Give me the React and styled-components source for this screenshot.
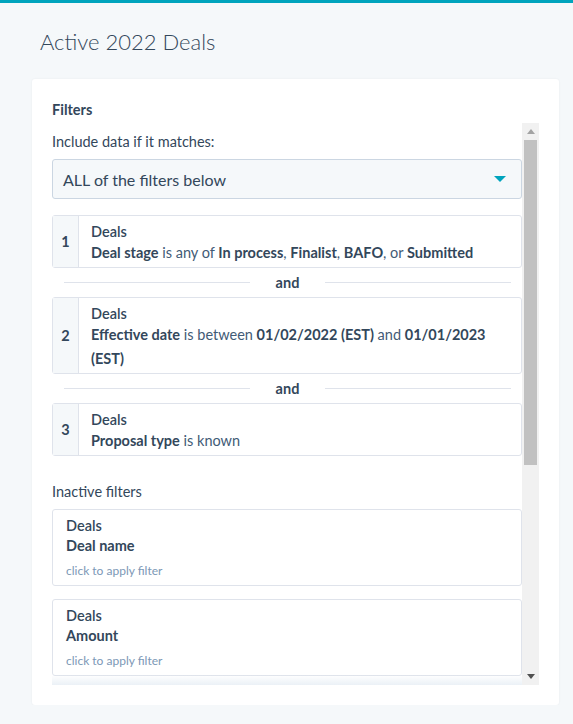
import React from "react";
import styled, { createGlobalStyle } from "styled-components";

const GlobalStyle = createGlobalStyle`
  * { box-sizing: border-box; }
  body {
    margin: 0;
    background: #f5f8fa;
    font-family: "Lato", "Noto Sans", sans-serif;
    color: #33475b;
  }
`;

const activeFilters = [
  {
    id: 1,
    parts: [
      ["b", "Deal stage"],
      ["n", " is any of "],
      ["b", "In process"],
      ["n", ", "],
      ["b", "Finalist"],
      ["n", ", "],
      ["b", "BAFO"],
      ["n", ", or "],
      ["b", "Submitted"],
    ],
  },
  {
    id: 2,
    parts: [
      ["b", "Effective date"],
      ["n", " is between "],
      ["b", "01/02/2022 (EST)"],
      ["n", " and "],
      ["b", "01/01/2023 (EST)"],
    ],
  },
  {
    id: 3,
    parts: [
      ["b", "Proposal type"],
      ["n", " is known"],
    ],
  },
];

const inactiveFilters = [
  "Deal name",
  "Amount",
  "Close date",
  "Deal owner",
  "Pipeline",
  "Create date",
];

const App = () => {
  return (
    <>
      <GlobalStyle />
      <TopBar />
      <Page>
        <Title>Active 2022 Deals</Title>
        <Card>
          <CardTitle>Filters</CardTitle>
          <ScrollWrap>
            <Viewport>
              <Label>Include data if it matches:</Label>
              <Select>
                <span>ALL of the filters below</span>
                <Caret />
              </Select>
              <FilterList>
                {activeFilters.map((f, i) => (
                  <React.Fragment key={f.id}>
                    {i > 0 && (
                      <AndRow>
                        <Line />
                        <span>and</span>
                        <Line />
                      </AndRow>
                    )}
                    <FilterCard>
                      <Num>{f.id}</Num>
                      <FilterBody>
                        <ObjectName>Deals</ObjectName>
                        <Rule>
                          {f.parts.map(([t, s], j) =>
                            t === "b" ? <strong key={j}>{s}</strong> : <span key={j}>{s}</span>
                          )}
                        </Rule>
                      </FilterBody>
                    </FilterCard>
                  </React.Fragment>
                ))}
              </FilterList>
              <SubLabel>Inactive filters</SubLabel>
              <InactiveList>
                {inactiveFilters.map((name) => (
                  <InactiveCard key={name}>
                    <ObjectName>Deals</ObjectName>
                    <PropName>{name}</PropName>
                    <Hint>click to apply filter</Hint>
                  </InactiveCard>
                ))}
              </InactiveList>
              <Fade />
            </Viewport>
            <ScrollBar>
              <ArrowBtn>
                <svg width="8" height="5" viewBox="0 0 8 5">
                  <polygon points="0,5 8,5 4,0" fill="#a3a3a3" />
                </svg>
              </ArrowBtn>
              <Track>
                <Thumb />
              </Track>
              <ArrowBtn>
                <svg width="8" height="5" viewBox="0 0 8 5">
                  <polygon points="0,0 8,0 4,5" fill="#505050" />
                </svg>
              </ArrowBtn>
            </ScrollBar>
          </ScrollWrap>
        </Card>
      </Page>
    </>
  );
};

export default App;

const TopBar = styled.div`
  height: 3px;
  background: #00a4bd;
`;

const Page = styled.div`
  padding: 0 14px 0 32px;
`;

const Title = styled.h1`
  margin: 0;
  padding: 24px 0 0 8px;
  height: 76px;
  font-size: 22px;
  font-weight: 300;
  line-height: 30px;
  color: #33475b;
`;

const Card = styled.div`
  background: #fff;
  border-radius: 3px;
  box-shadow: 0 0 2px rgba(45, 62, 80, 0.08);
  padding: 21px 20px 20px 20px;
`;

const CardTitle = styled.h2`
  margin: 0;
  font-size: 14.5px;
  font-weight: 700;
  line-height: 20px;
  color: #33475b;
`;

const ScrollWrap = styled.div`
  display: flex;
  height: 562px;
  margin-top: 3px;
`;

const Viewport = styled.div`
  position: relative;
  flex: 1;
  min-width: 0;
  overflow: hidden;
  padding-top: 8px;
`;

const ScrollBar = styled.div`
  width: 17px;
  flex: none;
  display: flex;
  flex-direction: column;
  background: #f1f1f1;
`;

const ArrowBtn = styled.div`
  height: 17px;
  flex: none;
  display: flex;
  align-items: center;
  justify-content: center;
`;

const Track = styled.div`
  flex: 1;
  padding: 0 2px;
`;

const Thumb = styled.div`
  height: 325px;
  background: #c1c1c1;
`;

const Fade = styled.div`
  position: absolute;
  left: 0;
  right: 0;
  bottom: 0;
  height: 10px;
  background: linear-gradient(rgba(234, 240, 246, 0), rgba(234, 240, 246, 0.95));
  pointer-events: none;
`;

const Label = styled.div`
  font-size: 14.5px;
  line-height: 22px;
  margin-bottom: 6px;
`;

const Select = styled.div`
  display: flex;
  align-items: center;
  justify-content: space-between;
  height: 40px;
  padding: 0 15px 0 10px;
  background: #f5f8fa;
  border: 1px solid #cbd6e2;
  border-radius: 3px;
  font-size: 16px;
  color: #33475b;
`;

const Caret = styled.span`
  width: 0;
  height: 0;
  border-left: 6px solid transparent;
  border-right: 6px solid transparent;
  border-top: 6px solid #00a4bd;
`;

const FilterList = styled.div`
  margin-top: 16px;
`;

const FilterCard = styled.div`
  display: flex;
  border: 1px solid #dfe3eb;
  border-radius: 3px;
  background: #fff;
`;

const Num = styled.div`
  width: 26px;
  flex: none;
  display: flex;
  align-items: center;
  justify-content: center;
  background: #f5f8fa;
  border-right: 1px solid #dfe3eb;
  font-size: 14.5px;
  font-weight: 700;
`;

const FilterBody = styled.div`
  padding: 7px 12px 2px 12px;
  font-size: 14.5px;
`;

const ObjectName = styled.div`
  font-size: 14.5px;
  line-height: 18px;
  font-weight: 600;
`;

const Rule = styled.div`
  line-height: 24px;
  strong {
    font-weight: 700;
  }
  span {
    font-weight: 400;
    color: #425b76;
  }
`;

const AndRow = styled.div`
  display: flex;
  align-items: center;
  gap: 24px;
  height: 29px;
  padding: 0 11px 0 12px;
  font-size: 14.5px;
  font-weight: 700;
  span {
    width: 27px;
    text-align: center;
  }
`;

const Line = styled.div`
  flex: 1;
  height: 1px;
  background: #dfe3eb;
`;

const SubLabel = styled.div`
  margin-top: 25px;
  font-size: 14.5px;
  line-height: 22px;
`;

const InactiveList = styled.div`
  display: flex;
  flex-direction: column;
  gap: 13px;
  margin-top: 6px;
`;

const InactiveCard = styled.div`
  height: 77px;
  flex: none;
  padding: 7px 13px 0 13px;
  border: 1px solid #dfe3eb;
  border-radius: 3px;
  background: #fff;
`;

const PropName = styled.div`
  font-size: 14.5px;
  line-height: 22px;
  font-weight: 700;
`;

const Hint = styled.div`
  margin-top: 6px;
  font-size: 12px;
  line-height: 16px;
  color: #7c98b6;
`;
